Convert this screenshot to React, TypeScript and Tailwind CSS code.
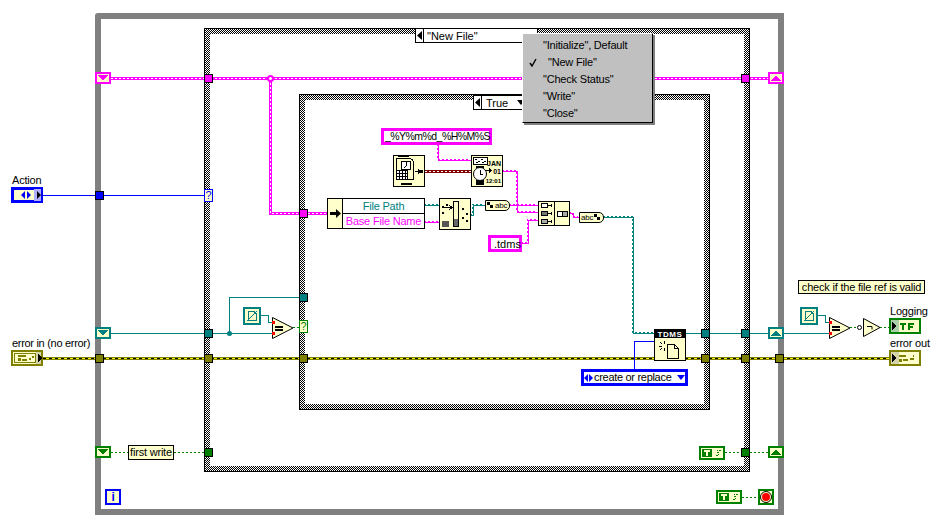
import React from "react";

const cream = "bg-[#ffffcc]";
const checker =
  "bg-[repeating-conic-gradient(#000_0_25%,#fff_0_50%)] bg-[length:2px_2px] [image-rendering:pixelated]";

function Frame({ className }: { className: string }) {
  return (
    <div className={`absolute border border-black ${checker} ${className}`}>
      <div className="absolute inset-[5px] bg-white" />
    </div>
  );
}

function Tunnel({ className }: { className: string }) {
  return <div className={`absolute w-[9px] h-[9px] border border-black ${className}`} />;
}

function Shift({ className, color, up }: { className: string; color: string; up?: boolean }) {
  return (
    <div className={`absolute w-[16px] h-[12px] ${className}`}>
      <svg width="16" height="12" className="block" shapeRendering="crispEdges">
        <rect x="1" y="1" width="14" height="10" fill="#ffffcc" stroke={color} strokeWidth="2" />
        {up ? (
          <polygon points="8,3 13,9 3,9" fill={color} />
        ) : (
          <polygon points="3,3 13,3 8,9" fill={color} />
        )}
      </svg>
    </div>
  );
}

function RefConst({ className }: { className: string }) {
  return (
    <div className={`absolute w-[18px] h-[18px] ${className}`}>
      <svg width="18" height="18" className="block" shapeRendering="crispEdges">
        <rect x="1" y="1" width="16" height="16" fill="#ffffcc" stroke="#008080" strokeWidth="2" />
        <path d="M5 4.5H11L13.5 7V13.5H5Z" fill="none" stroke="#008080" />
        <path d="M4 14L14 4" stroke="#008080" shapeRendering="auto" />
      </svg>
    </div>
  );
}

function Equal({ className }: { className: string }) {
  return (
    <div className={`absolute w-[22px] h-[22px] ${className}`}>
      <svg width="22" height="22" className="block">
        <polygon points="0.5,0.5 21,11 0.5,21.5" fill="#ffffcc" stroke="#000" />
        <rect x="3" y="9" width="8" height="2" fill="#000" />
        <rect x="3" y="12" width="8" height="2" fill="#000" />
        <rect x="0" y="4" width="3" height="3" fill="#ff0000" />
        <rect x="0" y="15" width="3" height="3" fill="#ff0000" />
      </svg>
    </div>
  );
}

function BoolConst({ className }: { className: string }) {
  return (
    <div className={`absolute w-[26px] h-[14px] ${className}`}>
      <svg width="26" height="14" className="block" shapeRendering="crispEdges">
        <rect x="1" y="1" width="24" height="12" fill="#ffffcc" stroke="#008000" strokeWidth="2" />
        <rect x="3" y="3" width="10" height="8" fill="#008000" />
        <path d="M5 4.5H11M8 4.5V10" stroke="#ffffcc" strokeWidth="2" />
        <path d="M18 4h1v1h-1zM20 4h2v1h-2zM18 6h2v1h-2zM19 8h1v1h-1zM17 9h2v1h-2z" fill="#008000" />
      </svg>
    </div>
  );
}

function ClusterIn() {
  return (
    <svg width="32" height="16" className="block" shapeRendering="crispEdges">
      <rect x="1" y="1" width="30" height="14" fill="#ffffcc" stroke="#808000" strokeWidth="2" />
      <rect x="3.5" y="3.5" width="21" height="9" fill="#ffffcc" stroke="#808000" />
      <rect x="25" y="2" width="5" height="12" fill="#d4d4a8" />
      <polygon points="27,4 31,8 27,12" fill="#000" />
      <path d="M7 5h8v2H7zM7 8h3v3H7zM11 9h5v2h-5zM18 8h2v2h-2zM21 6h2v2h-2z" fill="#808000" />
    </svg>
  );
}

function ClusterOut() {
  return (
    <svg width="32" height="16" className="block" shapeRendering="crispEdges">
      <rect x="1" y="1" width="30" height="14" fill="#ffffcc" stroke="#808000" strokeWidth="2" />
      <rect x="2" y="2" width="8" height="12" fill="#d4d4a8" />
      <polygon points="3,4 8,8 3,12" fill="#000" />
      <path d="M10 5h7v2h-7zM10 9h3v3h-3zM14 9h5v2h-5zM21 8h4v2h-4zM24 5h1v2h-1z" fill="#808000" />
    </svg>
  );
}

function Wires() {
  const thick = (d: string, c: string) => (
    <g key={d}>
      <path d={d} fill="none" stroke={c} strokeWidth="3" />
      <path d={d} fill="none" stroke="#fff" strokeWidth="1" strokeDasharray="2 2" />
    </g>
  );
  const notched = (d: string, c: string) => (
    <g key={d}>
      <path d={d} fill="none" stroke={c} strokeWidth="1" />
      <path d={d} fill="none" stroke={c} strokeWidth="1" strokeDasharray="2 2" transform="translate(-1 -1)" />
    </g>
  );
  const str = (d: string) => notched(d, "#ff00ff");
  const path = (d: string) => notched(d, "#008080");
  const err = (d: string) => (
    <g key={d}>
      <path d={d} fill="none" stroke="#808000" strokeWidth="3" />
      <path d={d} fill="none" stroke="#ffff00" strokeWidth="1" />
      <path d={d} fill="none" stroke="#000" strokeWidth="1" strokeDasharray="3 3" />
    </g>
  );
  const thin = (d: string, c: string) => <path key={d} d={d} fill="none" stroke={c} strokeWidth="1" />;
  const bool = (d: string) => (
    <path key={d} d={d} fill="none" stroke="#008000" strokeWidth="1" strokeDasharray="2 2" />
  );
  return (
    <svg width="944" height="522" className="absolute left-0 top-0" shapeRendering="crispEdges">
      {thick("M111 78.5H768", "#ff00ff")}
      {thick("M270.5 78.5V213.5H327", "#ff00ff")}
      {str("M438.5 145V160.5H471")}
      {str("M503 171.5H517.5V212.5H538")}
      {str("M510 205.5H538")}
      {str("M522 243.5H528.5V220.5H538")}
      {str("M570 213.5H573.5V217.5H579")}
      {str("M425 222.5H439")}
      {path("M425 205.5H439")}
      {path("M471 215.5H473.5V205.5H485")}
      {path("M604 217.5H633.5V333.5H654")}
      <path d="M425 171.5H471" fill="none" stroke="#800000" strokeWidth="3" />
      <path d="M425 171.5H471" fill="none" stroke="#fff" strokeWidth="1" strokeDasharray="2 2" />
      {err("M43 358.5H889")}
      {thin("M43 195.5H204", "#0000ff")}
      {thin("M634.5 369V341.5H654", "#0000ff")}
      {thin("M111 333.5H272", "#008080")}
      {thin("M229.5 333.5V297.5H299", "#008080")}
      {thin("M261 315.5H268.5V322.5H272", "#008080")}
      {thin("M686 333.5H768", "#008080")}
      {thin("M784 333.5H829", "#008080")}
      {thin("M818 315.5H825.5V322.5H829", "#008080")}
      {bool("M293 327.5H299")}
      {bool("M850 327.5H858")}
      {bool("M880 327.5H889")}
      {bool("M111 452.5H128")}
      {bool("M174 452.5H204")}
      {bool("M725 452.5H741")}
      {bool("M750 452.5H768")}
      {bool("M742 497.5H758")}
      <circle cx="270.5" cy="78.5" r="2.5" fill="#fff" stroke="#ff00ff" strokeWidth="2" shapeRendering="auto" />
      <circle cx="229.5" cy="333.5" r="2.5" fill="#008080" shapeRendering="auto" />
      <circle cx="859.5" cy="327.5" r="2" fill="#fff" stroke="#000" strokeWidth="1" shapeRendering="auto" />
    </svg>
  );
}

function CalendarIcon() {
  return (
    <svg width="30" height="30" className="block" shapeRendering="crispEdges">
      <path d="M2.5 2.5H15Q19.5 2.5 19.5 7V23.5H2.5Z" fill="none" stroke="#000" />
      <path d="M4 0.5H15" stroke="#000" />
      <rect x="7.5" y="5.5" width="9" height="8" fill="#fff" stroke="#000" />
      <path d="M12 6V10L10 12" stroke="#000" fill="none" />
      <path d="M2.5 14.5H13.5V23.5H2.5Z M2.5 17.5H13.5 M2.5 20.5H13.5 M5.5 14.5V23.5 M8.5 14.5V23.5 M11.5 14.5V23.5" fill="#fff" stroke="#000" />
      <rect x="7" y="27" width="11" height="2" fill="#000" />
      <path d="M21 15.5H25" stroke="#000" />
      <polygon points="24,13 27,15.5 24,18" fill="#000" />
      <rect x="26" y="14" width="3" height="3" fill="#000" />
    </svg>
  );
}

function DateIcon() {
  return (
    <svg width="30" height="30" className="block" shapeRendering="crispEdges">
      <rect x="1.5" y="1.5" width="14" height="7" fill="#fff" stroke="#000" />
      <path d="M3 3h2v1H3zM6 5h2v1H6zM9 3h2v1H9zM12 5h2v1h-2zM4 6h2v1H4zM10 6h2v1h-2z" fill="#000" />
      <path d="M4 10H12V12H4ZM4 24H12V29H4Z" fill="#000" />
      <circle cx="8" cy="18" r="6.5" fill="#fff" stroke="#000" shapeRendering="auto" />
      <path d="M8 14V18H11" stroke="#000" fill="none" />
      <path d="M13 14.5H18" stroke="#000" />
      <polygon points="17,12 20,14.5 17,17" fill="#000" />
    </svg>
  );
}

export default function App() {
  const font = "font-['Liberation_Sans',Arial,sans-serif]";
  return (
    <div className={`relative w-[944px] h-[522px] bg-white overflow-hidden text-black text-[11px] tracking-[-0.2px] leading-none ${font}`}>
      {/* While loop */}
      <div className="absolute left-[95px] top-[13px] w-[689px] h-[502px] border-[6px] border-[#808080] rounded-tl-[3px]" />

      <Frame className="left-[204px] top-[28px] w-[546px] h-[444px]" />
      <Frame className="left-[299px] top-[94px] w-[411px] h-[316px]" />

      <Wires />

      {/* Case selectors */}
      <div className="absolute left-[415px] top-[28px] w-[123px] h-[15px] border border-black bg-white flex">
        <div className="w-[8px] border-r border-black flex items-center justify-center">
          <svg width="6" height="9"><polygon points="5,0 5,9 0,4.5" fill="#000" /></svg>
        </div>
        <span className="pl-[3px] leading-[14px] tracking-normal">"New File"</span>
      </div>
      <div className="absolute left-[473px] top-[95px] w-[60px] h-[15px] border border-black bg-white flex">
        <div className="w-[8px] border-r border-black flex items-center justify-center">
          <svg width="6" height="9"><polygon points="5,0 5,9 0,4.5" fill="#000" /></svg>
        </div>
        <span className="pl-[4px] leading-[14px] tracking-normal">True</span>
      </div>
      <svg width="8" height="5" className="absolute left-[517px] top-[100px]"><polygon points="0,0 8,0 4,5" fill="#000" /></svg>

      {/* Case menu */}
      <div className="absolute left-[522px] top-[33px] w-[131px] h-[90px] bg-[#c0c0c0] border border-t-white border-l-white border-r-black border-b-black shadow-[2px_2px_0_#808080] z-10 flex flex-col pt-[3px] pl-[20px]">
        {['"Initialize", Default', '"New File"', '"Check Status"', '"Write"', '"Close"'].map((t, i) => (
          <div key={t} className="relative h-[17px] leading-[17px] whitespace-nowrap">
            {i === 1 && (
              <svg width="8" height="9" className="absolute left-[-14px] top-[4px]">
                <path d="M1 5L3 8L7 1" fill="none" stroke="#000" strokeWidth="1.4" />
              </svg>
            )}
            <span className={i === 1 ? "pl-[5px]" : ""}>{t}</span>
          </div>
        ))}
      </div>

      {/* Left terminals */}
      <div className="absolute left-[11px] top-[174px] flex flex-col gap-[1px]">
        <span className="pl-[1px] leading-[12px]">Action</span>
        <div className="relative w-[32px] h-[16px] border-2 border-[#0000ff] bg-white">
          <div className="absolute left-0 top-0 w-[26px] h-[12px] bg-[#ffffcc] border border-[#0000ff] flex items-center justify-center">
            <svg width="10" height="8"><polygon points="4,0 4,8 0,4" fill="#0000ff" /><polygon points="6,0 6,8 10,4" fill="#0000ff" /></svg>
          </div>
          <div className="absolute right-0 top-0 w-[7px] h-[12px] bg-[#b0b0ff] flex items-center justify-end">
            <svg width="4" height="8"><polygon points="0,0 4,4 0,8" fill="#000" /></svg>
          </div>
        </div>
      </div>
      <div className="absolute left-[11px] top-[337px] flex flex-col gap-[1px]">
        <span className="pl-[1px] leading-[12px] whitespace-nowrap tracking-[-0.3px]">error in (no error)</span>
        <ClusterIn />
      </div>

      {/* Shift registers */}
      <Shift className="left-[95px] top-[72px]" color="#ff00ff" />
      <Shift className="left-[95px] top-[327px]" color="#008080" />
      <Shift className="left-[95px] top-[446px]" color="#008000" />
      <Shift className="left-[768px] top-[72px]" color="#ff00ff" up />
      <Shift className="left-[768px] top-[327px]" color="#008080" up />
      <Shift className="left-[768px] top-[446px]" color="#008000" up />

      {/* Tunnels */}
      <Tunnel className="left-[95px] top-[191px] bg-[#0000ff]" />
      <Tunnel className="left-[95px] top-[354px] bg-[#808000]" />
      <Tunnel className="left-[204px] top-[74px] bg-[#ff00ff]" />
      <Tunnel className="left-[204px] top-[329px] bg-[#008080]" />
      <Tunnel className="left-[204px] top-[354px] bg-[#808000]" />
      <Tunnel className="left-[204px] top-[448px] bg-[#008000]" />
      <Tunnel className="left-[299px] top-[209px] bg-[#ff00ff]" />
      <Tunnel className="left-[299px] top-[293px] bg-[#008080]" />
      <Tunnel className="left-[299px] top-[354px] bg-[#808000]" />
      <Tunnel className="left-[701px] top-[329px] bg-[#008080]" />
      <Tunnel className="left-[701px] top-[354px] bg-[#808000]" />
      <Tunnel className="left-[741px] top-[74px] bg-[#ff00ff]" />
      <Tunnel className="left-[741px] top-[329px] bg-[#008080]" />
      <Tunnel className="left-[741px] top-[354px] bg-[#808000]" />
      <Tunnel className="left-[741px] top-[448px] bg-[#008000]" />
      <Tunnel className="left-[775px] top-[354px] bg-[#808000]" />

      {/* Selector terminals */}
      <div className={`absolute left-[204px] top-[189px] w-[9px] h-[13px] border border-[#0000ff] ${cream} text-[#0000ff] leading-[11px] text-center`}>?</div>
      <div className={`absolute left-[299px] top-[320px] w-[9px] h-[13px] border border-[#008000] ${cream} text-[#008000] leading-[11px] text-center`}>?</div>

      {/* Compare */}
      <RefConst className="left-[243px] top-[307px]" />
      <Equal className="left-[272px] top-[317px]" />
      <RefConst className="left-[800px] top-[307px]" />
      <Equal className="left-[829px] top-[317px]" />
      <svg width="18" height="19" className="absolute left-[863px] top-[318px]">
        <polygon points="0.5,0.5 17,9.5 0.5,18.5" fill="#ffffcc" stroke="#000" />
        <path d="M4 8.5H9V11.5" fill="none" stroke="#000" />
      </svg>

      {/* String constant */}
      <div className="absolute left-[381px] top-[128px] w-[111px] h-[17px] border-[3px] border-[#ff00ff] bg-white pl-[1px] text-[10.5px] leading-[11px] tracking-[-0.55px] whitespace-nowrap">_%Y%m%d_%H%M%S</div>

      {/* Clock nodes */}
      <div className={`absolute left-[393px] top-[155px] w-[32px] h-[32px] border border-black ${cream}`}><CalendarIcon /></div>
      <div className={`absolute left-[471px] top-[155px] w-[32px] h-[32px] border border-black ${cream}`}>
        <DateIcon />
        <div className="absolute right-[1px] top-[4px] flex flex-col items-end font-bold tracking-normal">
          <span className="text-[7px] leading-[8px]">JAN</span>
          <span className="text-[7px] leading-[8px] mb-[1px]">01</span>
          <span className="text-[6px] leading-[8px]">12:01</span>
        </div>
      </div>

      {/* Unbundle */}
      <div className="absolute left-[327px] top-[198px] w-[98px] h-[31px] border border-black bg-white flex">
        <div className={`w-[15px] ${cream} border-r border-black flex items-center justify-center`}>
          <svg width="11" height="9"><path d="M0 3H6V0L11 4.5L6 9V6H0Z" fill="#000" /></svg>
        </div>
        <div className="flex-1 flex flex-col whitespace-nowrap">
          <div className="h-[15px] text-[#008080] text-center leading-[14px] border-b border-black">File Path</div>
          <div className="flex-1 text-[#ff00ff] text-center leading-[14px]">Base File Name</div>
        </div>
      </div>

      {/* Strip path */}
      <div className={`absolute left-[439px] top-[198px] w-[32px] h-[32px] border border-black ${cream}`}>
        <svg width="30" height="30" className="block" shapeRendering="crispEdges">
          <rect x="13.5" y="2.5" width="5" height="25" fill="#ffffcc" stroke="#000" />
          <rect x="14" y="20" width="4" height="7" fill="#666" />
          <rect x="2" y="22" width="7" height="6" fill="#555" />
          <path d="M2 7h2v2H2zM6 5h2v2H6zM2 13h2v2H2zM22 9h2v2h-2zM26 14h2v2h-2zM22 18h2v2h-2zM26 21h2v2h-2z" fill="#000" />
          <path d="M4 8.5H11M9 6L12 8.5L9 11" fill="none" stroke="#000" />
        </svg>
      </div>

      {/* Path to string */}
      <div className={`absolute left-[485px] top-[200px] w-[25px] h-[11px] border border-black rounded-r-[5px] ${cream}`}>
        <svg width="23" height="9" className="block" shapeRendering="crispEdges">
          <path d="M1 1h3v3H1zM4 4h3v3H4z" fill="#000" />
          <text x="9" y="7" fontSize="8" fontFamily="Liberation Sans">abc</text>
        </svg>
      </div>
      <div className={`absolute left-[579px] top-[212px] w-[25px] h-[11px] border border-black rounded-r-[5px] ${cream}`}>
        <svg width="23" height="9" className="block" shapeRendering="crispEdges">
          <text x="1" y="7" fontSize="8" fontFamily="Liberation Sans">abc</text>
          <path d="M14 1h3v3h-3zM17 4h3v3h-3z" fill="#000" />
        </svg>
      </div>

      {/* Concat */}
      <div className={`absolute left-[538px] top-[201px] w-[32px] h-[25px] border border-black ${cream} flex`}>
        <div className="w-[16px] border-r border-black">
          <svg width="15" height="23" className="block" shapeRendering="crispEdges">
            <rect x="2.5" y="1.5" width="6" height="4" fill="#fff" stroke="#000" />
            <rect x="2.5" y="9.5" width="6" height="4" fill="#777" stroke="#000" />
            <rect x="2.5" y="17.5" width="6" height="4" fill="#aaa" stroke="#000" />
            <path d="M9 3.5H13M9 11.5H13M9 19.5H13" stroke="#000" />
            <path d="M12 2h1v3h-1zM12 10h1v3h-1zM12 18h1v3h-1z" fill="#000" />
          </svg>
        </div>
        <div className="flex-1 flex items-center justify-center">
          <svg width="11" height="6" shapeRendering="crispEdges">
            <rect x="0" y="0" width="11" height="6" fill="#000" />
            <rect x="1" y="1" width="4" height="4" fill="#fff" />
            <rect x="6" y="1" width="4" height="4" fill="#aaa" />
          </svg>
        </div>
      </div>

      {/* .tdms */}
      <div className="absolute left-[488px] top-[235px] w-[34px] h-[17px] border-[3px] border-[#ff00ff] bg-white pl-[3px] leading-[12px] tracking-normal">.tdms</div>

      {/* TDMS */}
      <div className={`absolute left-[654px] top-[329px] w-[32px] h-[32px] border border-black ${cream} flex flex-col`}>
        <div className="h-[8px] bg-black text-white text-[8px] font-bold leading-[9px] text-center tracking-[0.6px]">TDMS</div>
        <svg width="30" height="22" className="block" shapeRendering="crispEdges">
          <path d="M12.5 6.5H19.5L23.5 10.5V20.5H12.5Z" fill="none" stroke="#000" />
          <path d="M19.5 6.5V10.5H23.5" fill="none" stroke="#000" />
          <path d="M9.5 3V6M4 8.5H7M5 4L7 6M9.5 10V13M5 12L7 10" stroke="#000" fill="none" />
        </svg>
      </div>

      {/* Enum */}
      <div className="absolute left-[581px] top-[369px] w-[107px] h-[17px] border-[3px] border-[#0000ff] bg-white flex items-center whitespace-nowrap">
        <svg width="9" height="8" className="mr-[1px] shrink-0"><polygon points="4,0 4,8 0,4" fill="#0000ff" /><polygon points="5,0 5,8 9,4" fill="#0000ff" /></svg>
        <span className="tracking-[-0.3px]">create or replace</span>
        <svg width="8" height="5" className="ml-auto shrink-0"><polygon points="0,0 8,0 4,5" fill="#0000ff" /></svg>
      </div>

      {/* Booleans / labels */}
      <div className={`absolute left-[128px] top-[445px] w-[46px] h-[15px] border border-black ${cream} text-center leading-[13px] whitespace-nowrap`}>first write</div>
      <BoolConst className="left-[699px] top-[446px]" />
      <BoolConst className="left-[716px] top-[490px]" />
      <div className="absolute left-[758px] top-[489px] w-[16px] h-[16px] border-2 border-[#008000] bg-[#ffffcc] flex items-center justify-center">
        <div className="w-[12px] h-[12px] rounded-full border border-black flex items-center justify-center">
          <div className="w-[8px] h-[8px] rounded-full bg-[#ff0000]" />
        </div>
      </div>
      <div className={`absolute left-[105px] top-[489px] w-[16px] h-[16px] border-2 border-[#0000ff] ${cream} text-[#0000ff] text-[12px] font-bold text-center leading-[12px]`}>i</div>

      {/* Right side */}
      <div className={`absolute left-[798px] top-[280px] w-[127px] h-[14px] border border-black ${cream} text-center leading-[12px] whitespace-nowrap`}>check if the file ref is valid</div>
      <div className="absolute left-[889px] top-[305px] flex flex-col gap-[1px]">
        <span className="pl-[1px] leading-[12px]">Logging</span>
        <svg width="32" height="16" className="block" shapeRendering="crispEdges">
          <rect x="1" y="1" width="30" height="14" fill="#ffffcc" stroke="#008000" strokeWidth="2" />
          <rect x="2" y="2" width="8" height="12" fill="#aad0aa" />
          <polygon points="3,4 8,8 3,12" fill="#000" />
          <path d="M11 5H17V7H15V12H13V7H11ZM19 5H25V7H21V8H24V10H21V12H19Z" fill="#008000" />
        </svg>
      </div>
      <div className="absolute left-[889px] top-[337px] flex flex-col gap-[1px]">
        <span className="pl-[1px] leading-[12px]">error out</span>
        <ClusterOut />
      </div>
    </div>
  );
}
